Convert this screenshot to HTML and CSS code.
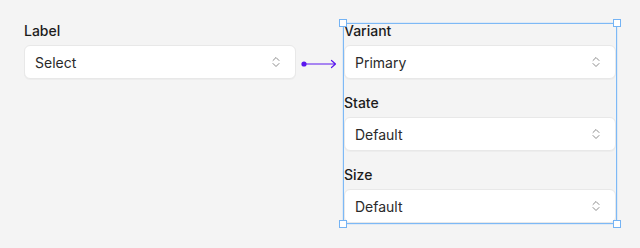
FILE: index.html
```html
<!DOCTYPE html>
<html lang="en">
<head>
  <meta charset="UTF-8" />
  <title>Select mapping</title>
  <link rel="stylesheet" href="styles.css">
</head>
<body>

<div class="canvas">
  <!-- source component -->
  <div class="column">
    <div class="field">
      <span class="field-label">Label</span>
      <div class="select">
        <span>Select</span>
        <svg class="chevron" width="8" height="12" viewBox="0 0 8 12"><path d="M1 4.5 L4 1.5 L7 4.5 M1 7.5 L4 10.5 L7 7.5" fill="none" stroke="currentColor" stroke-width="1" stroke-linecap="round" stroke-linejoin="round"/></svg>
      </div>
    </div>
  </div>

  <div class="connector">
    <svg width="36" height="10" viewBox="0 0 36 10">
      <circle cx="4" cy="5" r="2.6" fill="#5a17ee"/>
      <path d="M4 5 H35.5 M31.5 1.5 L35.5 5 L31.5 8.5" fill="none" stroke="#5a17ee" stroke-width="1.2" stroke-linecap="round" stroke-linejoin="round"/>
    </svg>
  </div>

  <!-- selected frame -->
  <div class="column frame">
    <span class="handle tl"></span>
    <span class="handle tr"></span>
    <span class="handle bl"></span>
    <span class="handle br"></span>

    <div class="field">
      <span class="field-label">Variant</span>
      <div class="select">
        <span>Primary</span>
        <svg class="chevron" width="8" height="12" viewBox="0 0 8 12"><path d="M1 4.5 L4 1.5 L7 4.5 M1 7.5 L4 10.5 L7 7.5" fill="none" stroke="currentColor" stroke-width="1" stroke-linecap="round" stroke-linejoin="round"/></svg>
      </div>
    </div>
    <div class="field">
      <span class="field-label">State</span>
      <div class="select">
        <span>Default</span>
        <svg class="chevron" width="8" height="12" viewBox="0 0 8 12"><path d="M1 4.5 L4 1.5 L7 4.5 M1 7.5 L4 10.5 L7 7.5" fill="none" stroke="currentColor" stroke-width="1" stroke-linecap="round" stroke-linejoin="round"/></svg>
      </div>
    </div>
    <div class="field">
      <span class="field-label">Size</span>
      <div class="select">
        <span>Default</span>
        <svg class="chevron" width="8" height="12" viewBox="0 0 8 12"><path d="M1 4.5 L4 1.5 L7 4.5 M1 7.5 L4 10.5 L7 7.5" fill="none" stroke="currentColor" stroke-width="1" stroke-linecap="round" stroke-linejoin="round"/></svg>
      </div>
    </div>
  </div>
</div>

</body>
</html>
```

FILE: styles.css
```css
html, body {
  margin: 0;
  padding: 0;
  background: #f4f4f4;
  color: #1f1f1f;
  font-family: Inter, "Noto Sans", sans-serif;
  font-size: 14px;
}

.canvas {
  display: flex;
  align-items: flex-start;
  padding: 24px;
}

.column {
  display: flex;
  flex-direction: column;
  gap: 17px;
  width: 272px;
}

.field {
  display: flex;
  flex-direction: column;
  gap: 7px;
}

.field-label {
  font-weight: 500;
  line-height: 14px;
  color: #1c1c1c;
}

.select {
  display: flex;
  align-items: center;
  justify-content: space-between;
  height: 34px;
  box-sizing: border-box;
  padding: 0 15px 0 10px;
  background: #fff;
  border: 1px solid #e8e8e8;
  border-radius: 6px;
  box-shadow: 0 1px 1px rgba(0, 0, 0, 0.03);
  color: #2a2a2a;
}

.chevron {
  color: #8c8c8c;
}

.connector {
  width: 48px;
  display: flex;
  justify-content: center;
  padding-top: 35px;
}

.connector svg {
  margin-left: -4px;
}

.frame {
  position: relative;
  outline: 1px solid #7db9f6;
  box-shadow: 0 0 0 1.5px rgba(125, 185, 246, 0.35);
}

.handle {
  position: absolute;
  width: 6px;
  height: 6px;
  background: #fff;
  border: 1px solid #74b3f4;
}

.handle.tl { top: -5px; left: -5px; }
.handle.tr { top: -5px; right: -5px; }
.handle.bl { bottom: -5px; left: -5px; }
.handle.br { bottom: -5px; right: -5px; }
```
